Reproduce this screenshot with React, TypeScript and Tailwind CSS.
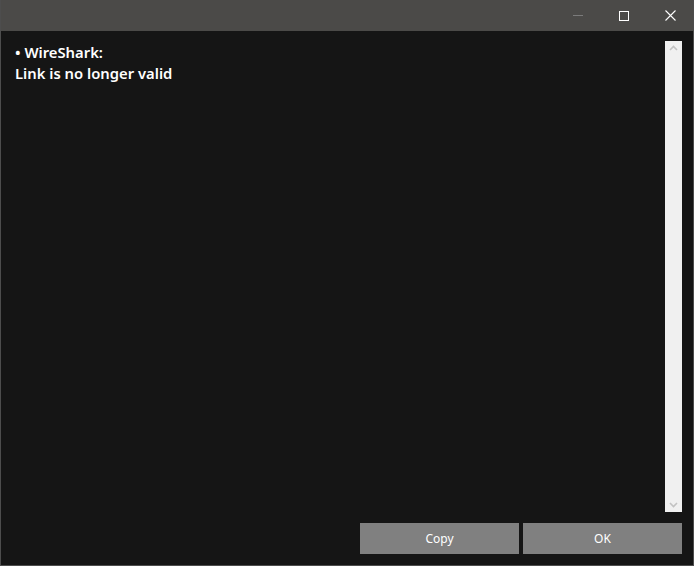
export default function App() {
  return (
    <div
      className="w-[694px] h-[566px] flex flex-col bg-[#151515] border border-t-0 border-[#4d4d4d] text-white overflow-hidden"
      style={{ fontFamily: '"Noto Sans", "Open Sans", sans-serif' }}
    >
      {/* title bar */}
      <div className="h-[31px] shrink-0 bg-[#4b4a48] flex justify-end">
        <button className="w-[46px] h-full flex items-center justify-center">
          <div className="w-[10px] h-px bg-[#7b7b7b]" />
        </button>
        <button className="w-[46px] h-full flex items-center justify-center">
          <div className="w-[10px] h-[10px] border border-white" />
        </button>
        <button className="w-[46px] h-full flex items-center justify-center">
          <svg width="11" height="11" viewBox="0 0 11 11" fill="none" stroke="white" strokeWidth="1.1">
            <path d="M0.5 0.5 L10.5 10.5 M10.5 0.5 L0.5 10.5" />
          </svg>
        </button>
      </div>

      {/* body */}
      <div className="flex-1 flex pt-[10px] pl-[14px] pr-[11px]">
        <div className="flex-1 pt-[1px] text-[14.8px] leading-[21px] font-semibold">
          <div>• WireShark:</div>
          <div>Link is no longer valid</div>
        </div>
        <div className="w-[17px] h-[471px] bg-[#f0f0f0] flex flex-col justify-between items-center py-[4px]">
          <svg width="9" height="6" viewBox="0 0 9 6" fill="none" stroke="#c2c2c2" strokeWidth="1.6">
            <path d="M1 5 L4.5 1.5 L8 5" />
          </svg>
          <svg width="9" height="6" viewBox="0 0 9 6" fill="none" stroke="#c2c2c2" strokeWidth="1.6">
            <path d="M1 1 L4.5 4.5 L8 1" />
          </svg>
        </div>
      </div>

      {/* buttons */}
      <div className="h-[43px] shrink-0 flex justify-end items-start gap-[4px] pt-[1px] pr-[11px]">
        <button className="w-[159px] h-[31px] bg-[#808080] text-white text-[12px]">Copy</button>
        <button className="w-[159px] h-[31px] bg-[#808080] text-white text-[12px]">OK</button>
      </div>
    </div>
  );
}
